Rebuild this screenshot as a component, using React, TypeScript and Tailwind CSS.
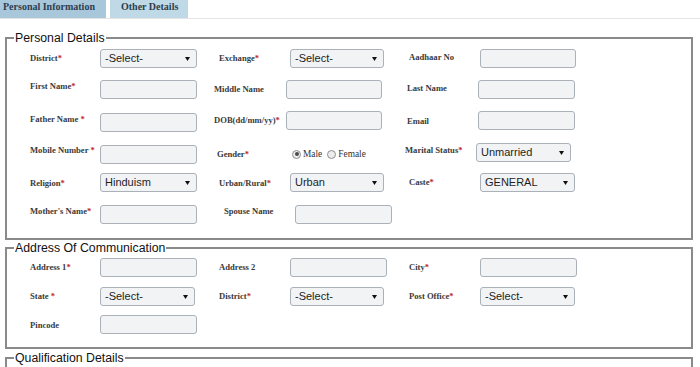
import React from "react";

const Req = () => <span className="text-[#c0282d]">*</span>;

function L({ t, req, sp, cls }: { t: string; req?: boolean; sp?: boolean; cls: string }) {
  return (
    <div
      className={`${cls} shrink-0 whitespace-nowrap font-bold text-[8.6px] leading-[12px] text-[#3a3a3a]`}
      style={{ fontFamily: '"Liberation Serif", "Times New Roman", serif' }}
    >
      {t}
      {req ? (sp ? " " : "") : ""}
      {req ? <Req /> : null}
    </div>
  );
}

function Inp({ cls }: { cls: string }) {
  return <div className={`${cls} shrink-0 h-[19px] rounded-[3px] border border-[#aab1b8] bg-[#f1f3f5]`} />;
}

function Sel({ cls, v }: { cls: string; v: string }) {
  return (
    <div
      className={`${cls} shrink-0 h-[19px] rounded-[3px] border border-[#aab1b8] bg-[#f1f3f5] flex items-center justify-between pl-[4px] pr-[6px] text-[11px] text-[#1e1e1e]`}
      style={{ fontFamily: '"Liberation Sans", Arial, sans-serif' }}
    >
      <span className="leading-[13px]">{v}</span>
      <svg width="5" height="4" viewBox="0 0 5 4">
        <path d="M0 0 L5 0 L2.5 4 Z" fill="#111" />
      </svg>
    </div>
  );
}

function Radio({ on }: { on?: boolean }) {
  return (
    <span className="w-[9px] h-[9px] rounded-full border border-[#8e8e8e] bg-[#ececec] flex items-center justify-center shrink-0">
      {on ? <span className="w-[4px] h-[4px] rounded-full bg-[#4a4a4a]" /> : null}
    </span>
  );
}

function Legend({ t }: { t: string }) {
  return (
    <legend
      className="ml-[7px] px-[1px] text-[12.3px] leading-[16px] text-[#111]"
      style={{ fontFamily: '"Liberation Sans", Arial, sans-serif' }}
    >
      {t}
    </legend>
  );
}

export default function App() {
  return (
    <div className="w-[700px] h-[367px] bg-white overflow-hidden">
      {/* Tabs */}
      <div
        className="flex h-[19px] border-b border-[#e4e4e4]"
        style={{ fontFamily: '"Liberation Serif", "Times New Roman", serif' }}
      >
        <div className="w-[106px] bg-[#a9c7db] text-[10px] font-bold text-[#2c3e4f] leading-[12px] pt-[1px] pl-[3px]">
          Personal Information
        </div>
        <div className="ml-[4px] w-[78px] bg-[#bfd9e7] text-[10px] font-bold text-[#2c3e4f] leading-[12px] pt-[1px] pl-[11px]">
          Other Details
        </div>
      </div>

      {/* Personal Details */}
      <fieldset className="ml-[5px] mt-[11px] w-[688px] border-2 border-[#8a8a8a] pb-[14px]">
        <Legend t="Personal Details" />
        <div className="flex items-start h-[31px] mt-[3px]">
          <L t="District" req cls="ml-[23px] w-[70px] mt-[3px]" />
          <Sel cls="w-[97px]" v="-Select-" />
          <L t="Exchange" req cls="ml-[22px] w-[71px] mt-[3px]" />
          <Sel cls="w-[94px]" v="-Select-" />
          <L t="Aadhaar No" cls="ml-[25px] w-[71px] mt-[2px]" />
          <Inp cls="w-[96px]" />
        </div>
        <div className="flex items-start h-[31px]">
          <L t="First Name" req cls="ml-[23px] w-[70px] mt-[0px]" />
          <Inp cls="w-[97px]" />
          <L t="Middle Name" cls="ml-[17px] w-[72px] mt-[3px]" />
          <Inp cls="w-[96px]" />
          <L t="Last Name" cls="ml-[25px] w-[71px] mt-[2px]" />
          <Inp cls="w-[97px]" />
        </div>
        <div className="flex items-start h-[32px]">
          <L t="Father Name" req sp cls="ml-[23px] w-[70px] mt-[2px]" />
          <Inp cls="w-[97px] mt-[2px]" />
          <L t="DOB(dd/mm/yy)" req cls="ml-[17px] w-[72px] mt-[3px]" />
          <Inp cls="w-[96px]" />
          <L t="Email" cls="ml-[25px] w-[71px] mt-[4px]" />
          <Inp cls="w-[97px]" />
        </div>
        <div className="flex items-start h-[30px]">
          <L t="Mobile Number" req sp cls="ml-[23px] w-[70px] mt-[1px]" />
          <Inp cls="w-[97px] mt-[2px]" />
          <L t="Gender" req cls="ml-[20px] w-[75px] mt-[5px]" />
          <div
            className="w-[113px] shrink-0 mt-[5px] flex items-center h-[12px] text-[9.4px] text-[#333]"
            style={{ fontFamily: '"Liberation Serif", "Times New Roman", serif' }}
          >
            <Radio on />
            <span className="ml-[2px]">Male</span>
            <span className="ml-[5px]">
              <Radio />
            </span>
            <span className="ml-[2px]">Female</span>
          </div>
          <L t="Marital Status" req cls="w-[71px] mt-[1px]" />
          <Sel cls="w-[95px]" v="Unmarried" />
        </div>
        <div className="flex items-start h-[32px]">
          <L t="Religion" req cls="ml-[23px] w-[70px] mt-[4px]" />
          <Sel cls="w-[97px]" v="Hinduism" />
          <L t="Urban/Rural" req cls="ml-[22px] w-[71px] mt-[4px]" />
          <Sel cls="w-[94px]" v="Urban" />
          <L t="Caste" req cls="ml-[25px] w-[71px] mt-[3px]" />
          <Sel cls="w-[95px]" v="GENERAL" />
        </div>
        <div className="flex items-start h-[19px]">
          <L t="Mother's Name" req cls="ml-[23px] w-[70px] mt-[0px]" />
          <Inp cls="w-[97px]" />
          <L t="Spouse Name" cls="ml-[27px] w-[71px] mt-[0px]" />
          <Inp cls="w-[97px]" />
        </div>
      </fieldset>

      {/* Address Of Communication */}
      <fieldset className="ml-[5px] mt-0 w-[688px] border-2 border-[#8a8a8a] pb-[13px]">
        <Legend t="Address Of Communication" />
        <div className="flex items-start h-[29px] mt-[2px]">
          <L t="Address 1" req cls="ml-[23px] w-[70px] mt-[3px]" />
          <Inp cls="w-[97px]" />
          <L t="Address 2" cls="ml-[22px] w-[71px] mt-[3px]" />
          <Inp cls="w-[97px]" />
          <L t="City" req cls="ml-[22px] w-[71px] mt-[3px]" />
          <Inp cls="w-[97px]" />
        </div>
        <div className="flex items-start h-[28px]">
          <L t="State" req sp cls="ml-[23px] w-[70px] mt-[3px]" />
          <Sel cls="w-[95px]" v="-Select-" />
          <L t="District" req cls="ml-[24px] w-[71px] mt-[3px]" />
          <Sel cls="w-[94px]" v="-Select-" />
          <L t="Post Office" req cls="ml-[25px] w-[71px] mt-[3px]" />
          <Sel cls="w-[95px]" v="-Select-" />
        </div>
        <div className="flex items-start h-[19px]">
          <L t="Pincode" cls="ml-[23px] w-[70px] mt-[4px]" />
          <Inp cls="w-[97px]" />
        </div>
      </fieldset>

      {/* Qualification Details */}
      <fieldset className="ml-[5px] mt-[1px] w-[688px] h-[60px] border-2 border-[#8a8a8a]">
        <Legend t="Qualification Details" />
      </fieldset>
    </div>
  );
}
